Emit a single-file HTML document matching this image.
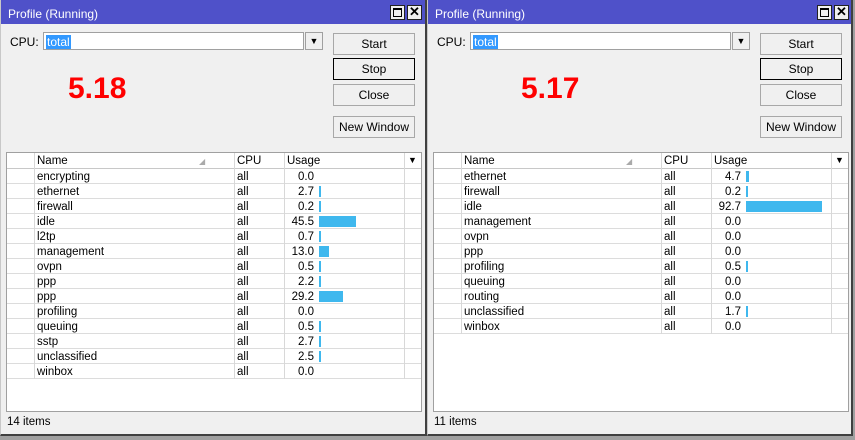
<!DOCTYPE html>
<html><head><style>
*{margin:0;padding:0;box-sizing:border-box}
body{width:855px;height:440px;background:#a0a0a0;position:relative;overflow:hidden;font-family:"Liberation Sans",sans-serif;font-size:11.5px;color:#000}
.win{position:absolute;top:0;width:427px;height:436px;background:#f0f0f0;border-right:2px solid #404040;border-bottom:2px solid #404040;border-left:1px solid #c8c8c8}
.title{position:absolute;left:0;top:0;right:0;height:24px;background:#4f51c9;color:#fff;font-size:12px;padding:7px 0 0 7px}
.tb{position:absolute;top:5px;width:15px;height:15px;background:#f0f0f0;border:1px solid #222}
.a{position:absolute}
.btn{position:absolute;left:332px;width:82px;height:22px;border:1px solid #a8a8a8;background:#f0f0f0;text-align:center;line-height:20px;font-size:12px}
.big{position:absolute;color:#f00;font-weight:bold;font-size:30px;top:72px}
.list{position:absolute;left:5px;top:152px;width:416px;height:260px;background:#fff;border:1px solid #a0a0a0}
.hdr{position:absolute;left:0;top:0;width:414px;height:16px;background:#fff;border-bottom:1px solid #c8c8c8}
.hdr span{position:absolute;top:2px}
.vl{position:absolute;top:0;width:1px;background:#d8d8d8}
.row{position:absolute;left:0;width:414px;height:15px;border-bottom:1px solid #dcdcdc}
.row span{position:absolute;top:2px}
.n{left:30px}.c{left:230px}
.num{width:307px;text-align:right;left:0}
.bar{position:absolute;top:2px;height:11px;background:#3fb8ee;left:312px}
.status{position:absolute;left:6px;top:416px;font-size:11.5px}
</style></head><body>

<div class="win" style="left:0">
 <div class="title">Profile (Running)</div>
 <div class="tb" style="left:389px"><div style="position:absolute;left:2px;top:2px;width:9px;height:9px;border:1px solid #000;border-top-width:2px"></div></div>
 <div class="tb" style="left:406px;text-align:center;line-height:12px;font-weight:bold;font-size:13px">✕</div>
 <div class="a" style="left:9px;top:35px;font-size:12px">CPU:</div>
 <div class="a" style="left:42px;top:32px;width:261px;height:18px;background:#fff;border:1px solid #a0a0a0"><span style="position:absolute;left:2px;top:2px;background:#3399ff;color:#fff;padding:0 1px;font-size:12px">total</span></div>
 <div class="a" style="left:304px;top:32px;width:18px;height:18px;border:1px solid #a0a0a0;background:#f0f0f0;text-align:center;font-size:9px;line-height:16px">▼</div>
 <div class="btn" style="top:33px">Start</div>
 <div class="btn" style="top:58px;border-color:#000">Stop</div>
 <div class="btn" style="top:84px">Close</div>
 <div class="btn" style="top:116px">New Window</div>
 <div class="big" style="left:67px">5.18</div>
 <div class="list">
  <div class="hdr"><span style="left:30px">Name</span><span style="left:192px;color:#aaa;font-size:8px;top:4px">◢</span><span style="left:230px">CPU</span><span style="left:280px">Usage</span><span style="left:401px;font-size:9px;top:2px">▼</span></div>
  <div class="row" style="top:16px"><span class="n">encrypting</span><span class="c">all</span><span class="num">0.0</span></div>
  <div class="row" style="top:31px"><span class="n">ethernet</span><span class="c">all</span><span class="num">2.7</span><div class="bar" style="width:2px"></div></div>
  <div class="row" style="top:46px"><span class="n">firewall</span><span class="c">all</span><span class="num">0.2</span><div class="bar" style="width:2px"></div></div>
  <div class="row" style="top:61px"><span class="n">idle</span><span class="c">all</span><span class="num">45.5</span><div class="bar" style="width:37px"></div></div>
  <div class="row" style="top:76px"><span class="n">l2tp</span><span class="c">all</span><span class="num">0.7</span><div class="bar" style="width:2px"></div></div>
  <div class="row" style="top:91px"><span class="n">management</span><span class="c">all</span><span class="num">13.0</span><div class="bar" style="width:10px"></div></div>
  <div class="row" style="top:106px"><span class="n">ovpn</span><span class="c">all</span><span class="num">0.5</span><div class="bar" style="width:2px"></div></div>
  <div class="row" style="top:121px"><span class="n">ppp</span><span class="c">all</span><span class="num">2.2</span><div class="bar" style="width:2px"></div></div>
  <div class="row" style="top:136px"><span class="n">ppp</span><span class="c">all</span><span class="num">29.2</span><div class="bar" style="width:24px"></div></div>
  <div class="row" style="top:151px"><span class="n">profiling</span><span class="c">all</span><span class="num">0.0</span></div>
  <div class="row" style="top:166px"><span class="n">queuing</span><span class="c">all</span><span class="num">0.5</span><div class="bar" style="width:2px"></div></div>
  <div class="row" style="top:181px"><span class="n">sstp</span><span class="c">all</span><span class="num">2.7</span><div class="bar" style="width:2px"></div></div>
  <div class="row" style="top:196px"><span class="n">unclassified</span><span class="c">all</span><span class="num">2.5</span><div class="bar" style="width:2px"></div></div>
  <div class="row" style="top:211px"><span class="n">winbox</span><span class="c">all</span><span class="num">0.0</span></div>
  <div class="vl" style="left:27px;height:226px"></div><div class="vl" style="left:227px;height:226px"></div><div class="vl" style="left:277px;height:226px"></div><div class="vl" style="left:397px;height:226px"></div>
 </div>
 <div class="status">14 items</div>
</div>

<div class="win" style="left:427px;width:426px">
 <div class="title">Profile (Running)</div>
 <div class="tb" style="left:389px"><div style="position:absolute;left:2px;top:2px;width:9px;height:9px;border:1px solid #000;border-top-width:2px"></div></div>
 <div class="tb" style="left:406px;text-align:center;line-height:12px;font-weight:bold;font-size:13px">✕</div>
 <div class="a" style="left:9px;top:35px;font-size:12px">CPU:</div>
 <div class="a" style="left:42px;top:32px;width:261px;height:18px;background:#fff;border:1px solid #a0a0a0"><span style="position:absolute;left:2px;top:2px;background:#3399ff;color:#fff;padding:0 1px;font-size:12px">total</span></div>
 <div class="a" style="left:304px;top:32px;width:18px;height:18px;border:1px solid #a0a0a0;background:#f0f0f0;text-align:center;font-size:9px;line-height:16px">▼</div>
 <div class="btn" style="top:33px">Start</div>
 <div class="btn" style="top:58px;border-color:#000">Stop</div>
 <div class="btn" style="top:84px">Close</div>
 <div class="btn" style="top:116px">New Window</div>
 <div class="big" style="left:93px">5.17</div>
 <div class="list">
  <div class="hdr"><span style="left:30px">Name</span><span style="left:192px;color:#aaa;font-size:8px;top:4px">◢</span><span style="left:230px">CPU</span><span style="left:280px">Usage</span><span style="left:401px;font-size:9px;top:2px">▼</span></div>
  <div class="row" style="top:16px"><span class="n">ethernet</span><span class="c">all</span><span class="num">4.7</span><div class="bar" style="width:3px"></div></div>
  <div class="row" style="top:31px"><span class="n">firewall</span><span class="c">all</span><span class="num">0.2</span><div class="bar" style="width:2px"></div></div>
  <div class="row" style="top:46px"><span class="n">idle</span><span class="c">all</span><span class="num">92.7</span><div class="bar" style="width:76px"></div></div>
  <div class="row" style="top:61px"><span class="n">management</span><span class="c">all</span><span class="num">0.0</span></div>
  <div class="row" style="top:76px"><span class="n">ovpn</span><span class="c">all</span><span class="num">0.0</span></div>
  <div class="row" style="top:91px"><span class="n">ppp</span><span class="c">all</span><span class="num">0.0</span></div>
  <div class="row" style="top:106px"><span class="n">profiling</span><span class="c">all</span><span class="num">0.5</span><div class="bar" style="width:2px"></div></div>
  <div class="row" style="top:121px"><span class="n">queuing</span><span class="c">all</span><span class="num">0.0</span></div>
  <div class="row" style="top:136px"><span class="n">routing</span><span class="c">all</span><span class="num">0.0</span></div>
  <div class="row" style="top:151px"><span class="n">unclassified</span><span class="c">all</span><span class="num">1.7</span><div class="bar" style="width:2px"></div></div>
  <div class="row" style="top:166px"><span class="n">winbox</span><span class="c">all</span><span class="num">0.0</span></div>
  <div class="vl" style="left:27px;height:181px"></div><div class="vl" style="left:227px;height:181px"></div><div class="vl" style="left:277px;height:181px"></div><div class="vl" style="left:397px;height:181px"></div>
 </div>
 <div class="status">11 items</div>
</div>
</body></html>
